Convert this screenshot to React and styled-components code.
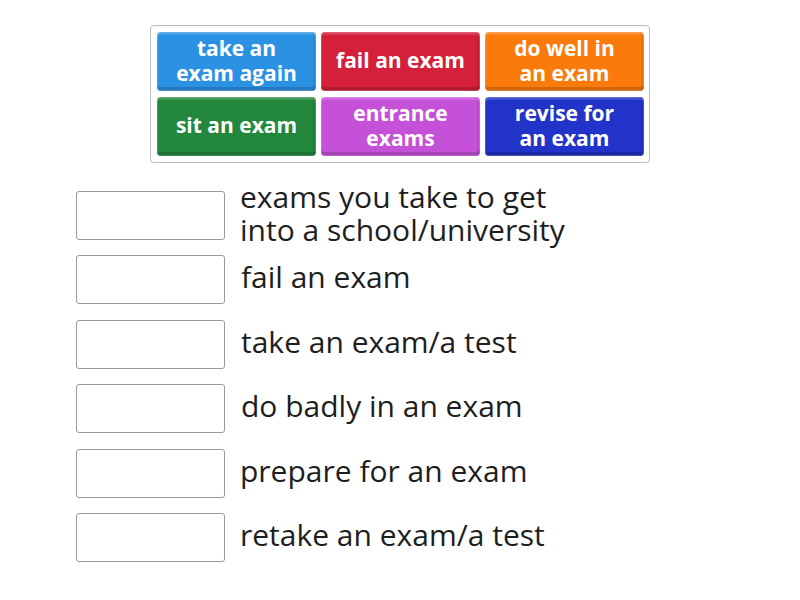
import React from "react";
import styled, { createGlobalStyle } from "styled-components";

const Global = createGlobalStyle`
  html, body { margin: 0; padding: 0; background: #ffffff; }
  body { font-family: "Open Sans", "Liberation Sans", sans-serif; }
`;

const Page = styled.div`
  width: 800px;
  height: 600px;
  padding-top: 25px;
  box-sizing: border-box;
`;

const Bank = styled.div`
  width: 500px;
  height: 138px;
  margin: 0 auto;
  box-sizing: border-box;
  border: 1px solid #b9b9b9;
  border-radius: 4px;
  padding: 6px;
  display: grid;
  grid-template-columns: repeat(3, 159px);
  grid-template-rows: repeat(2, 59px);
  column-gap: 5px;
  row-gap: 6px;
`;

const Tile = styled.div`
  background: ${(p) => p.$color};
  border-radius: 4px;
  display: flex;
  align-items: center;
  justify-content: center;
  text-align: center;
  color: #ffffff;
  font-weight: 700;
  font-size: 21px;
  line-height: 25px;
  padding: 0 14px 2px;
  box-shadow: inset 0 0 0 1px rgba(255, 255, 255, 0.18),
    inset 0 3px 0 rgba(255, 255, 255, 0.14),
    inset 0 -4px 0 rgba(0, 0, 0, 0.16),
    inset -3px 0 0 rgba(0, 0, 0, 0.08);
`;

const List = styled.div`
  padding-left: 76px;
  margin-top: 28px;
  display: flex;
  flex-direction: column;
  gap: 15.4px;
`;

const Row = styled.div`
  display: flex;
  align-items: center;
  height: 49px;
`;

const Slot = styled.div`
  width: 149px;
  height: 49px;
  box-sizing: border-box;
  border: 1px solid #9a9a9a;
  border-radius: 3px;
  flex: none;
  background: #fff;
`;

const Prompt = styled.div`
  margin-left: ${(p) => p.$offset}px;
  width: 345px;
  font-size: 30px;
  line-height: 33px;
  padding-bottom: 6px;
  color: #1e1e1e;
`;

const tiles = [
  ["take an exam again", "#2b91e3"],
  ["fail an exam", "#d4203a"],
  ["do well in an exam", "#fa7b0c"],
  ["sit an exam", "#23873e"],
  ["entrance exams", "#c651d9"],
  ["revise for an exam", "#2233c9"],
];

const prompts = [
  ["exams you take to get into a school/university", 15],
  ["fail an exam", 16],
  ["take an exam/a test", 16],
  ["do badly in an exam", 16],
  ["prepare for an exam", 15],
  ["retake an exam/a test", 15],
];

export default function App() {
  return (
    <Page>
      <Global />
      <Bank>
        {tiles.map(([t, c]) => (
          <Tile key={t} $color={c}>
            {t}
          </Tile>
        ))}
      </Bank>
      <List>
        {prompts.map(([t, o]) => (
          <Row key={t}>
            <Slot />
            <Prompt $offset={o}>{t}</Prompt>
          </Row>
        ))}
      </List>
    </Page>
  );
}
